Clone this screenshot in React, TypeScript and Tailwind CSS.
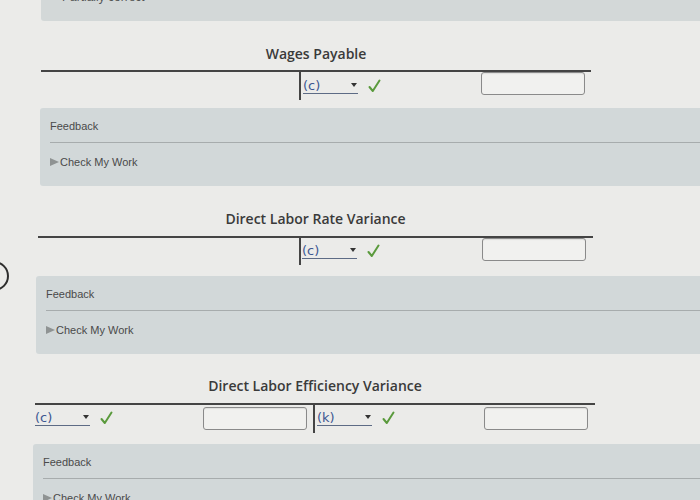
import React from "react";

function Check() {
  return (
    <svg width="13" height="14" viewBox="0 0 13 14" className="ml-[10px] shrink-0">
      <path d="M1.5 8 L4.8 12 L11.5 1.5" fill="none" stroke="#5a9a3c" strokeWidth="2" strokeLinecap="round" strokeLinejoin="round" />
    </svg>
  );
}

function Select({ label }: { label: string }) {
  return (
    <div className="flex items-center">
      <div className="w-[55px] h-[16px] border-b-[1.5px] border-[#5d6b85] flex items-end justify-between">
        <span className="text-[13px] leading-[15px] text-[#3b5791] font-['DejaVu_Sans',sans-serif] font-medium">{label}</span>
        <svg width="6" height="4" viewBox="0 0 6 4" className="mb-[6px] mr-[1px]">
          <path d="M0 0 H6 L3 4Z" fill="#333" />
        </svg>
      </div>
      <Check />
    </div>
  );
}

function Box() {
  return <input readOnly className="w-[104px] h-[23px] border border-[#8a8a8a] rounded-[3px] bg-[#f1f1ef] shadow-[inset_0_1px_1px_rgba(0,0,0,0.08)] outline-none" />;
}

function Feedback({ ml, mt, cut }: { ml: string; mt: string; cut?: boolean }) {
  return (
    <div className={`${ml} ${mt} bg-[#d2d8d9] rounded-l-[3px] pt-[8px] pl-[10px] ${cut ? "pb-[30px]" : "pb-[14px]"} font-['Liberation_Sans',Arial,sans-serif] text-[11px] text-[#4a4a4a]`}>
      <div className="h-[20px] leading-[20px]">Feedback</div>
      <div className="mt-[6px] h-px bg-[#a7acad]" />
      <div className="mt-[9px] h-[20px] leading-[20px] flex items-center">
        <svg width="9" height="8" viewBox="0 0 9 8" className="mr-[1px]">
          <path d="M0 0 L9 4 L0 8Z" fill="#8f9393" />
        </svg>
        <span>Check My Work</span>
      </div>
    </div>
  );
}

function Title({ text, mt, mb }: { text: string; mt: string; mb: string }) {
  return (
    <div className={`${mt} ${mb} h-[20px] leading-[20px] text-center text-[14px] font-semibold text-[#3a3a3a] font-['Open_Sans',sans-serif]`}>
      {text}
    </div>
  );
}

export default function App() {
  return (
    <div className="relative w-[700px] h-[500px] overflow-hidden bg-[#ebebe9]">
      {/* partial circle at left edge */}
      <svg width="12" height="34" viewBox="0 0 12 34" className="absolute left-0 top-[259px]">
        <circle cx="-6" cy="17" r="14" fill="none" stroke="#2e2e2e" strokeWidth="2" />
      </svg>

      {/* top panel */}
      <div className="ml-[41px] h-[21px] bg-[#d3d8d8] rounded-bl-[3px] overflow-hidden pl-[21px]">
        <div className="-mt-[10px] text-[12px] leading-[14px] text-[#555] font-['Liberation_Sans',Arial,sans-serif]">Partially correct</div>
      </div>

      {/* Section 1 */}
      <div className="ml-[41px] w-[550px]">
        <Title text="Wages Payable" mt="mt-[23px]" mb="mb-[6px]" />
        <div className="h-[2px] bg-[#444]" />
        <div className="flex h-[28px]">
          <div className="w-[258px]" />
          <div className="w-[2px] bg-[#444]" />
          <div className="flex-1 flex justify-between items-start pl-[2px] pr-[6px]">
            <div className="mt-[6px]"><Select label="(c)" /></div>
            <Box />
          </div>
        </div>
      </div>
      <Feedback ml="ml-[40px]" mt="mt-[8px]" />

      {/* Section 2 */}
      <div className="ml-[38px] w-[555px]">
        <Title text="Direct Labor Rate Variance" mt="mt-[23px]" mb="mb-[7px]" />
        <div className="h-[2px] bg-[#444]" />
        <div className="flex h-[27px]">
          <div className="w-[261px]" />
          <div className="w-[2px] bg-[#444]" />
          <div className="flex-1 flex justify-between items-start pl-[1px] pr-[7px]">
            <div className="mt-[5px]"><Select label="(c)" /></div>
            <Box />
          </div>
        </div>
      </div>
      <Feedback ml="ml-[36px]" mt="mt-[11px]" />

      {/* Section 3 */}
      <div className="ml-[35px] w-[560px]">
        <Title text="Direct Labor Efficiency Variance" mt="mt-[22px]" mb="mb-[7px]" />
        <div className="h-[2px] bg-[#444]" />
        <div className="flex h-[28px]">
          <div className="w-[278px] flex justify-between items-start pr-[6px]">
            <div className="mt-[5px]"><Select label="(c)" /></div>
            <div className="mt-[1px]"><Box /></div>
          </div>
          <div className="w-[2px] bg-[#444]" />
          <div className="flex-1 flex justify-between items-start pl-[2px] pr-[7px]">
            <div className="mt-[5px]"><Select label="(k)" /></div>
            <div className="mt-[1px]"><Box /></div>
          </div>
        </div>
      </div>
      <Feedback ml="ml-[33px]" mt="mt-[11px]" cut />
    </div>
  );
}
